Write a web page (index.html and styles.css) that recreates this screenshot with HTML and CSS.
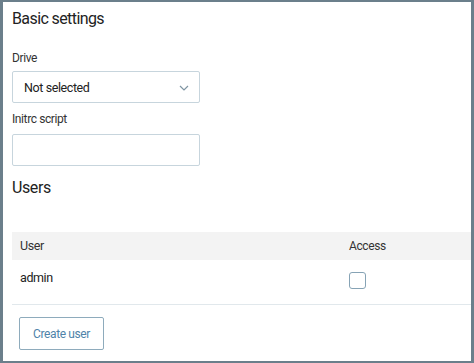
FILE: index.html
```html
<!DOCTYPE html>
<html lang="en">
    <head>
        <meta charset="UTF-8">
        <title>Basic settings</title>
        <link rel="stylesheet" href="styles.css">
    </head>

    <body>
        <div class="frame">
            <h2 class="title">Basic settings</h2>

            <label class="field_label">Drive</label>
            <div class="select_box">
                <span>Not selected</span>
                <svg class="chevron" width="10" height="6" viewBox="0 0 10 6">
                    <path d="M1 1 L5 5 L9 1" fill="none" stroke="#7f95a3" stroke-width="1.2"/>
                </svg>
            </div>

            <label class="field_label second">Initrc script</label>
            <div class="text_box"></div>

            <h2 class="title users">Users</h2>

            <div class="users_table">
                <div class="row head">
                    <div class="col_user">User</div>
                    <div class="col_access">Access</div>
                </div>
                <div class="row">
                    <div class="col_user">admin</div>
                    <div class="col_access">
                        <span class="check"></span>
                    </div>
                </div>
            </div>

            <button class="create_btn">Create user</button>
        </div>
    </body>
</html>
```

FILE: styles.css
```css
*{
    box-sizing: border-box;
}
body {
    margin: 0;
    font-family: Roboto, "Liberation Sans", sans-serif;
    color: #222;
    background-color: white;
}
.frame{
    width: 474px;
    height: 363px;
    border-style: solid;
    border-color: #6b7f8b;
    border-width: 2px 3px 2px 3px;
    padding: 7px 0 0 9px;
    overflow: hidden;
    letter-spacing: -0.4px;
}
.title{
    margin: 0;
    font-size: 16px;
    font-weight: normal;
    line-height: 20px;
    letter-spacing: -0.6px;
}
.field_label{
    display: block;
    margin-top: 21px;
    margin-bottom: 5px;
    font-size: 12px;
    line-height: 16px;
    color: #333;
}
.field_label.second{
    margin-top: 8px;
    margin-bottom: 7px;
}
.select_box, .text_box{
    width: 188px;
    height: 32px;
    border: 1px solid #c7d5dd;
    border-radius: 2px;
}
.select_box{
    display: flex;
    align-items: center;
    justify-content: space-between;
    padding: 0 10px 0 11px;
    font-size: 12.5px;
}
.chevron{
    margin-top: 2px;
}
.users{
    margin-top: 12px;
    letter-spacing: -0.4px;
}
.users_table{
    margin-top: 34px;
    font-size: 12px;
}
.row{
    display: flex;
    align-items: flex-start;
    height: 45px;
    padding-top: 10px;
    border-bottom: 1px solid #e1e8ec;
}
.row.head{
    height: 28px;
    padding-top: 0;
    align-items: center;
    background-color: #f3f3f3;
    border-bottom: none;
    color: #333;
}
.col_user{
    width: 329px;
    padding-left: 8px;
    line-height: 16px;
}
.col_access{
    padding-left: 8px;
    display: flex;
}
.row .col_user{
    font-size: 12.5px;
}
.check{
    display: inline-block;
    width: 17px;
    height: 17px;
    border: 1.5px solid #86a3b5;
    border-radius: 3px;
    margin-top: 2px;
}
.create_btn{
    margin: 12px 0 0 7px;
    width: 85px;
    height: 33px;
    background-color: white;
    border: 1px solid #8eabbc;
    border-radius: 2px;
    color: #4f83a9;
    font-family: Roboto, "Liberation Sans", sans-serif;
    font-size: 12px;
    letter-spacing: -0.4px;
}
```
